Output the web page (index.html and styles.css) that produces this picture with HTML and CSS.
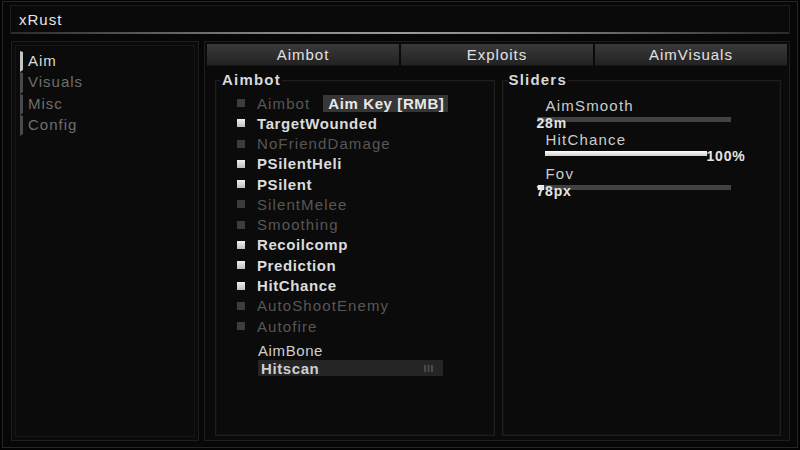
FILE: index.html
```html
<!DOCTYPE html>
<html>
<head>
<meta charset="utf-8">
<link rel="stylesheet" href="styles.css">
</head>
<body>
<div class="window">
  <div class="titlebar"><span class="title">xRust</span></div>
  <div class="main">
    <nav class="sidebar">
      <div class="nav-item active">Aim</div>
      <div class="nav-item">Visuals</div>
      <div class="nav-item">Misc</div>
      <div class="nav-item">Config</div>
    </nav>
    <section class="content">
      <div class="tabs">
        <div class="tab">Aimbot</div>
        <div class="tab">Exploits</div>
        <div class="tab">AimVisuals</div>
      </div>
      <div class="groups">
        <div class="group">
          <div class="group-title">Aimbot</div>
          <div class="checks">
            <div class="check off"><span class="box"></span><span class="lbl">Aimbot</span><span class="key">Aim Key [RMB]</span></div>
            <div class="check on"><span class="box"></span><span class="lbl">TargetWounded</span></div>
            <div class="check off"><span class="box"></span><span class="lbl">NoFriendDamage</span></div>
            <div class="check on"><span class="box"></span><span class="lbl">PSilentHeli</span></div>
            <div class="check on"><span class="box"></span><span class="lbl">PSilent</span></div>
            <div class="check off"><span class="box"></span><span class="lbl">SilentMelee</span></div>
            <div class="check off"><span class="box"></span><span class="lbl">Smoothing</span></div>
            <div class="check on"><span class="box"></span><span class="lbl">Recoilcomp</span></div>
            <div class="check on"><span class="box"></span><span class="lbl">Prediction</span></div>
            <div class="check on"><span class="box"></span><span class="lbl">HitChance</span></div>
            <div class="check off"><span class="box"></span><span class="lbl">AutoShootEnemy</span></div>
            <div class="check off"><span class="box"></span><span class="lbl">Autofire</span></div>
          </div>
          <div class="combo-label">AimBone</div>
          <div class="combo">
            <span>Hitscan</span>
            <svg class="combo-icon" width="9" height="7" viewBox="0 0 9 7"><rect x="0" y="0" width="2" height="7" fill="#4a4a4a"/><rect x="3.5" y="0" width="2" height="7" fill="#4a4a4a"/><rect x="7" y="0" width="2" height="7" fill="#4a4a4a"/></svg>
          </div>
        </div>
        <div class="group">
          <div class="group-title">Sliders</div>
          <div class="sliders">
            <div class="slider">
              <div class="s-label">AimSmooth</div>
              <div class="track"></div>
              <div class="s-value">28m</div>
            </div>
            <div class="slider full">
              <div class="s-label">HitChance</div>
              <div class="track-row"><div class="track fill"></div><div class="s-value">100%</div></div>
            </div>
            <div class="slider">
              <div class="s-label">Fov</div>
              <div class="track"><div class="knob"></div></div>
              <div class="s-value">78px</div>
            </div>
          </div>
        </div>
      </div>
    </section>
  </div>
</div>
</body>
</html>
```
FILE: styles.css
```css
* { box-sizing: border-box; }
html, body { margin: 0; padding: 0; }
body {
  width: 800px;
  height: 450px;
  overflow: hidden;
  background: #030303;
  font-family: "Liberation Sans", Arial, sans-serif;
  font-size: 15px;
  color: #cfcfcf;
}
.window {
  margin: 1px 2px;
  height: 447px;
  border: 1px solid #262626;
  background: #070707;
  padding: 3px 7px 6px 7px;
  display: flex;
  flex-direction: column;
}
.titlebar {
  height: 29px;
  border: 1px solid #1c1c1c;
  border-bottom: 0;
  background: #0a0a0a;
  display: flex;
  align-items: center;
  padding-left: 8px;
  position: relative;
}
.titlebar::after {
  content: "";
  position: absolute;
  left: 0; right: 0; bottom: 0;
  height: 2px;
  background: linear-gradient(to right, #2a2a2a 0%, #8a8a8a 35%, #9a9a9a 50%, #8a8a8a 65%, #2a2a2a 100%);
}
.title {
  color: #e6e6e6;
  letter-spacing: 1px;
  margin-top: -2px;
}
.main {
  flex: 1;
  display: flex;
  gap: 5px;
  margin-top: 7px;
}
.sidebar {
  width: 188px;
  border: 1px solid #1e1e1e;
  box-shadow: inset 0 0 0 3px #0b0b0b, inset 0 0 0 4px #161616;
  background: #0b0b0b;
  padding: 9px 0 0 8px;
  margin-left: 1px;
}
.nav-item {
  height: 21.3px;
  line-height: 18px;
  padding-left: 5px;
  border-left: 3px solid #4a4a4a;
  color: #6e6e6e;
  letter-spacing: 1px;
  border-top: 1px solid transparent;
  border-bottom: 2px solid transparent;
}
.nav-item.active {
  color: #d8d8d8;
  border-left-color: #c4c4c4;
}
.content {
  flex: 1;
  border: 1px solid #1e1e1e;
  padding: 2px;
  display: flex;
  flex-direction: column;
  background: #0a0a0a;
}
.tabs {
  display: grid;
  grid-template-columns: 1fr 1fr 1fr;
  gap: 2px;
  height: 21px;
}
.tab {
  background: linear-gradient(#3a3a3a, #222222);
  border-bottom: 1px solid #141414;
  color: #e2e2e2;
  text-align: center;
  line-height: 21px;
  letter-spacing: 1px;
}
.groups {
  flex: 1;
  display: flex;
  gap: 7px;
  padding: 15px 6px 2px 8px;
}
.group {
  flex: 1;
  border: 1px solid #1e1e1e;
  box-shadow: inset 0 0 0 1px #101010;
  background: #0b0b0b;
  display: flex;
  flex-direction: column;
}
.group-title {
  margin: -8px 0 0 5px;
  padding: 0 1px;
  align-self: flex-start;
  background: #0a0a0a;
  font-weight: bold;
  color: #d8d8d8;
  letter-spacing: 1.2px;
  line-height: 14px;
  height: 14px;
}
.checks {
  padding: 6px 0 0 21px;
}
.check {
  height: 20.27px;
  display: flex;
  align-items: center;
  gap: 12px;
}
.box {
  width: 8px;
  height: 8px;
  flex: none;
}
.check.on .box { background: linear-gradient(#f0f0f0, #bdbdbd); }
.check.off .box { background: #3c3c3c; }
.check.on .lbl { color: #dcdcdc; font-weight: bold; letter-spacing: 0.6px; }
.check.off .lbl { color: #575757; letter-spacing: 1.1px; }
.key {
  margin-left: 1px;
  background: #363636;
  color: #e8e8e8;
  font-weight: bold;
  letter-spacing: 0.6px;
  padding: 0 4px 0 5px;
  height: 17px;
  line-height: 17px;
}
.combo-label {
  margin: 6px 0 0 42px;
  color: #cfcfcf;
  letter-spacing: 0.6px;
  line-height: 17px;
}
.combo {
  margin: 1px 0 0 42px;
  width: 185px;
  height: 16px;
  background: #252525;
  display: flex;
  align-items: center;
  justify-content: space-between;
  padding: 0 10px 0 3px;
  color: #cfcfcf;
  font-weight: bold;
  letter-spacing: 0.6px;
}
.combo-icon { flex: none; }
.sliders {
  padding: 11px 0 0 34px;
}
.slider {
  height: 34px;
}
.s-label {
  margin-left: 9px;
  color: #cccccc;
  letter-spacing: 1.2px;
  line-height: 15px;
  height: 15px;
}
.track {
  margin-top: 4px;
  width: 194px;
  height: 5px;
  background: #424242;
  position: relative;
}
.knob {
  position: absolute;
  left: 1px; top: 0;
  width: 6px; height: 5px;
  background: #f2f2f2;
}
.s-value {
  position: relative;
  z-index: 1;
  margin-top: -5px;
  color: #e4e4e4;
  font-weight: bold;
  font-size: 14px;
  line-height: 13px;
  height: 13px;
  letter-spacing: 0.8px;
}
.track-row {
  display: flex;
  align-items: flex-start;
  margin-left: 8px;
}
.track.fill {
  width: 162px;
  background: linear-gradient(#ffffff, #cfcfcf);
}
.track-row .s-value {
  margin-top: 3px;
}
```
